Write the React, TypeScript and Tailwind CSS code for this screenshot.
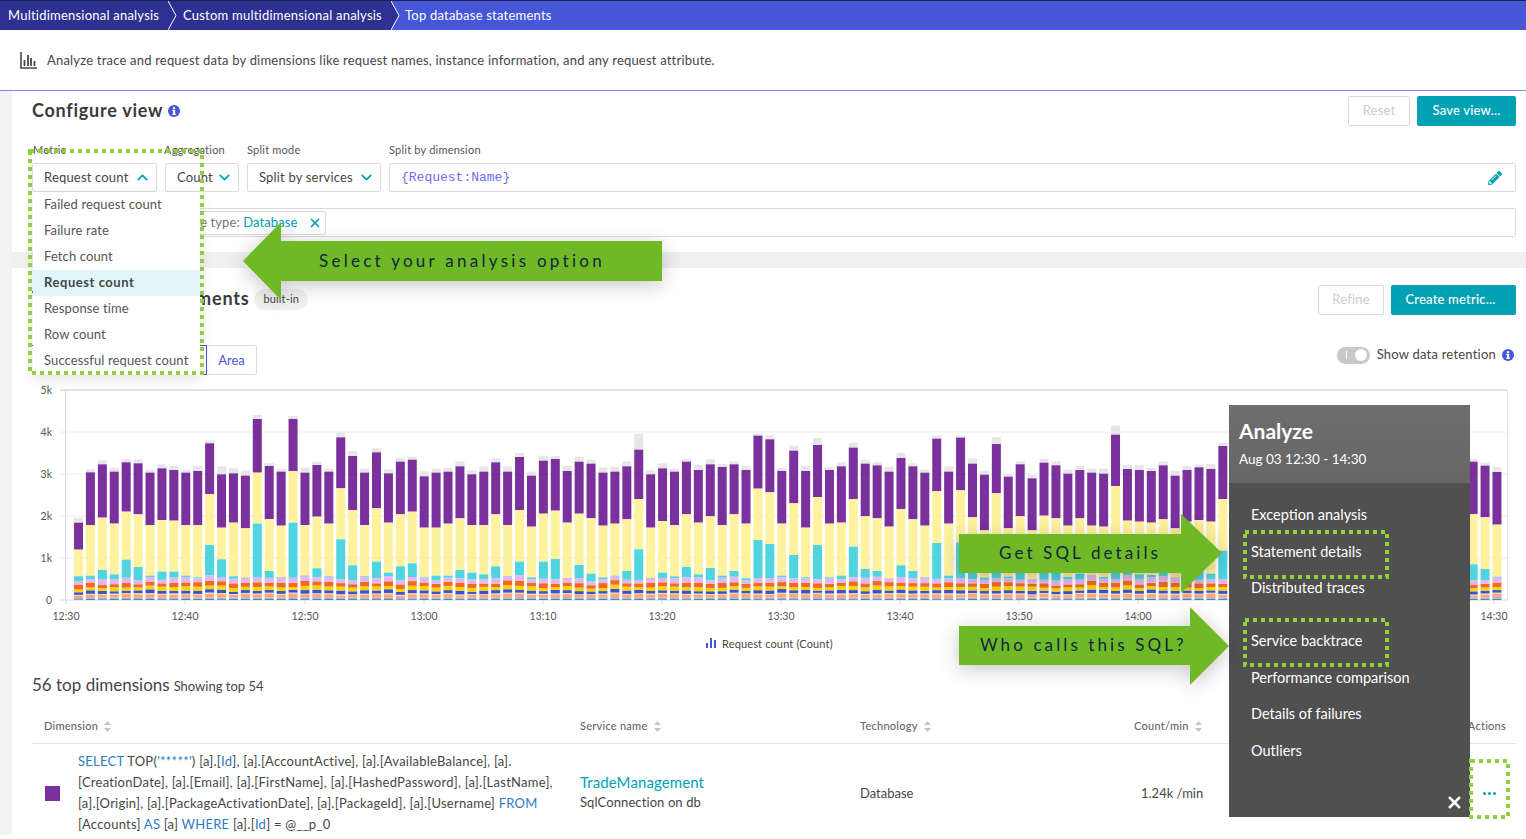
import React from "react";
import { ChevronDown, ChevronUp, X } from "lucide-react";
import { FaPencilAlt } from "react-icons/fa";

const D: number[][] = [
  [413,494,574],[262,420,572],[238,398,555],[260,416,568],[232,380,524],[235,388,546],[263,420,572],[250,405,560],[255,407,560],[263,420,572],[258,420,577],[175,327,480],[268,428,523],[265,413,574],[272,430,582],[102,263,416],[243,402,558],[260,422,577],[102,258,413],[263,420,574],[240,395,550],[260,416,574],[157,310,463],
  [213,375,541],[263,420,574],[202,370,530],[265,413,563],[230,388,544],[224,380,535],[274,428,577],[263,428,572],[260,416,572],[244,400,555],[268,420,563],[260,420,568],[232,388,544],[260,420,574],[216,375,530],[272,425,577],[227,386,530],[222,377,522],[258,413,580],[230,386,540],[236,400,566],[263,422,577],[260,416,572],[244,403,558],[194,342,493],[268,428,583],[250,408,563],
  [260,420,574],[230,388,546],[255,413,568],[238,394,549],[246,420,572],[238,388,558],[255,416,580],[152,311,465],[163,322,477],[258,416,572],[197,355,510],[258,428,577],[180,336,480],[255,416,577],[244,413,572],[188,342,485],[236,394,552],[241,400,558],[260,425,582],[219,372,541],[244,403,558],[263,422,577],[161,319,474],[260,416,572],[158,316,472],
  [236,397,558],[269,436,578],[177,325,480],[275,430,575],[238,394,545],[280,436,590],[233,392,548],[241,400,555],[266,422,576],[255,400,566],[263,422,577],[266,425,576],[149,303,460],[252,407,560],[255,410,568],[258,413,570],[241,403,560],[272,430,588],[255,410,570],[247,405,560],[252,410,566],[183,342,497],
];
const TAIL: [number, number[]][] = [[117,[230,387,538]],[118,[242,397,552]],[119,[261,419,575]]];
const BIG_GRAY: Record<number, number> = { 12: 8, 47: 16, 62: 7, 87: 9, 74: 2, 77: 7, 57: 2 };
const hash = (i: number, k: number) => { const s = Math.sin(i * 12.9898 + k * 78.233) * 43758.5453; return s - Math.floor(s); };
const SEG = ["#2e9e8e","#c9a0dc","#f9a87a","#f7d79a","#3b4fd8","#f7d308","#f26a1b","#e2b6f0"];
const SEGH = [1,1.5,3,1,3,3.5,4,4.5];

function Bar({ i, d }: { i: number; d: number[] }) {
  const x = 74 + 11.92 * i;
  const toY = (z: number) => 385 + z / 3;
  const [p, y, c] = d.map(toY);
  const g = BIG_GRAY[i] ?? 3 + Math.floor(hash(i, 9) * 3);
  let cur = 600;
  const rects = SEGH.map((h, k) => {
    const hh = h * (0.75 + hash(i, k) * 0.5);
    cur -= hh;
    return <rect key={k} x={x} y={cur} width={9} height={hh} fill={SEG[k]} />;
  });
  const cb = Math.max(cur, c + 1);
  return (
    <g>
      <rect x={x} y={p - g} width={9} height={g} fill="#e6e6e6" />
      <rect x={x} y={p} width={9} height={y - p} fill="#7a319e" />
      <rect x={x} y={y} width={9} height={c - y} fill="#fff29e" />
      <rect x={x} y={c} width={9} height={Math.max(cb - c, 0)} fill="#4fd4e0" />
      {rects}
    </g>
  );
}

function Chart() {
  const times: [number, string][] = [[66,"12:30"],[185,"12:40"],[305,"12:50"],[424,"13:00"],[543,"13:10"],[662,"13:20"],[781,"13:30"],[900,"13:40"],[1019,"13:50"],[1138,"14:00"],[1494,"14:30"]];
  const ys: [number, string][] = [[390,"5k"],[432,"4k"],[474,"3k"],[516,"2k"],[558,"1k"],[600,"0"]];
  return (
    <svg width={1514} height={240} viewBox="12 385 1514 240" className="block">
      {ys.map(([y, l]) => (
        <g key={l}>
          <line x1={60} x2={1507} y1={y} y2={y} stroke={y === 390 ? "#e2e2e2" : y === 600 ? "#d4daf0" : "#ececec"} strokeWidth={y === 390 ? 2 : 1} />
          <text x={52} y={y + 3.5} textAnchor="end" fontSize={10.5} fill="#555">{l}</text>
        </g>
      ))}
      <line x1={65.5} x2={65.5} y1={390} y2={600} stroke="#d4daf0" />
      <line x1={1507.5} x2={1507.5} y1={390} y2={600} stroke="#e2e2e2" />
      {D.map((d, i) => <Bar key={i} i={i} d={d} />)}
      {TAIL.map(([i, d]) => <Bar key={i} i={i} d={d} />)}
      {times.map(([x, l]) => (
        <g key={l}>
          <line x1={x} x2={x} y1={600} y2={604} stroke="#d4daf0" />
          <text x={x} y={620} textAnchor="middle" fontSize={10.5} fill="#555">{l}</text>
        </g>
      ))}
    </svg>
  );
}

function Info({ className }: { className: string }) {
  return (
    <svg viewBox="0 0 12 12" className={className}>
      <circle cx="6" cy="6" r="6" fill="#4556d7" />
      <rect x="5" y="5" width="2.2" height="4.6" fill="#fff" />
      <rect x="4.2" y="5" width="1.5" height="1" fill="#fff" />
      <rect x="4.2" y="8.8" width="3.8" height="1" fill="#fff" />
      <circle cx="6" cy="3.2" r="1.2" fill="#fff" />
    </svg>
  );
}

function Sort() {
  return (
    <svg width="7" height="11" viewBox="0 0 7 11" className="ml-[6px] inline-block">
      <path d="M3.5 0 7 4H0Z M0 7h7L3.5 11Z" fill="#c4c4c4" />
    </svg>
  );
}

function Chevron({ left, right }: { left: string; right: string }) {
  return (
    <svg width="9" height="29" viewBox="0 0 9 29" className="shrink-0 block">
      <rect width="9" height="29" fill={right} />
      <path d="M0 0 8 14.5 0 29Z" fill={left} />
      <path d="M0 0 8 14.5 0 29" fill="none" stroke="#fff" strokeWidth="1" />
    </svg>
  );
}

function Dotted({ className, w, h }: { className: string; w: number; h: number }) {
  return (
    <svg width={w} height={h} className={"absolute pointer-events-none " + className}>
      <rect x="2" y="2" width={w - 4} height={h - 4} fill="none" stroke="#8fd03f" strokeWidth="4" strokeDasharray="4 4" />
    </svg>
  );
}

function Select({ label, className, up }: { label: string; className: string; up?: boolean }) {
  return (
    <div className={"flex h-[29px] items-center justify-between rounded-[2px] border border-[#dcdcdc] bg-white pl-[11px] pr-[5px] text-[13px] tracking-[0.18px] text-[#454646] " + className}>
      <span>{label}</span>
      {up ? <ChevronUp size={17} strokeWidth={2.5} color="#00a1b2" /> : <ChevronDown size={17} strokeWidth={2.5} color="#00a1b2" />}
    </div>
  );
}

const BtnGhost = ({ className, children }: { className: string; children: React.ReactNode }) => (
  <div className={"flex h-[30px] items-center justify-center rounded-[2px] border border-[#dcdcdc] text-[13px] tracking-[0.2px] text-[#cccccc] " + className}>{children}</div>
);
const BtnTeal = ({ className, children }: { className: string; children: React.ReactNode }) => (
  <div className={"flex h-[30px] items-center justify-center rounded-[2px] bg-[#00a1b2] text-[13px] font-medium tracking-[0.2px] text-white " + className}>{children}</div>
);

function Dropdown() {
  const items = ["Failed request count","Failure rate","Fetch count","Request count","Response time","Row count","Successful request count"];
  return (
    <div className="absolute left-[33px] top-[192px] w-[167px] bg-white pb-[1px] shadow-[0_4px_12px_rgba(0,0,0,0.12)]">
      {items.map((t) => (
        <div key={t} className={"flex h-[26px] items-center pl-[11px] text-[13px] whitespace-nowrap " + (t === "Request count" ? "bg-[#e2f6fa] font-bold tracking-[0.55px] text-[#454646]" : "tracking-[0.12px] text-[#555]")}>{t}</div>
      ))}
    </div>
  );
}

function Arrow({ className, w, h, points, label, labelClass }: { className: string; w: number; h: number; points: string; label: string; labelClass: string }) {
  return (
    <div className={"absolute " + className}>
      <svg width={w} height={h} className="block overflow-visible drop-shadow-[0_4px_10px_rgba(0,0,0,0.22)]">
        <polygon points={points} fill="#70b926" />
      </svg>
      <span className={"absolute whitespace-nowrap text-[17px] text-[#10253f] " + labelClass}>{label}</span>
    </div>
  );
}

function AnalyzePanel() {
  const rows: [string, string][] = [["Exception analysis","mt-[21px]"],["Statement details","mt-[15.5px]"],["Distributed traces","mt-[15.5px]"],["Service backtrace","mt-[32px]"],["Performance comparison","mt-[15.5px]"],["Details of failures","mt-[15.5px]"],["Outliers","mt-[15.5px]"]];
  return (
    <div className="absolute left-[1229px] top-[405px] flex h-[412px] w-[241px] flex-col bg-[#505050] text-white">
      <div className="h-[78px] bg-gradient-to-b from-[#6e6e6e] to-[#666666] pl-[10px] pt-[12px]">
        <div className="text-[21px] font-bold leading-[28px]">Analyze</div>
        <div className="mt-[5px] text-[13.5px] leading-[18px]">Aug 03 12:30 - 14:30</div>
      </div>
      <div className="relative flex-1 pl-[22px]">
        {rows.map(([t, m]) => <div key={t} className={"h-[21px] text-[14.5px] leading-[21px] " + m}>{t}</div>)}
        <X className="absolute bottom-[5px] right-[6px]" size={19} strokeWidth={3.2} color="#fff" />
      </div>
    </div>
  );
}

export default function App() {
  const kw = "text-[#2d7cc1]";
  return (
    <div className="relative h-[839px] w-[1526px] overflow-hidden bg-white font-[Lato,sans-serif] text-[#454646]">
      <div className="flex h-[30px] items-stretch border-t border-[#1d1d4f] bg-[#4556d7] text-[13px] tracking-[0.22px] text-white">
        <div className="flex w-[168px] items-center bg-[#2e3192] pl-[8px]">Multidimensional analysis</div>
        <Chevron left="#2e3192" right="#2e3192" />
        <div className="flex w-[214px] items-center bg-[#2e3192] pl-[6px]">Custom multidimensional analysis</div>
        <Chevron left="#2e3192" right="#4556d7" />
        <div className="flex items-center pl-[5px]">Top database statements</div>
      </div>

      <div className="flex h-[61px] items-center border-b border-[#7a8ce8] pl-[20px] text-[13px]">
        <svg width="18" height="17" viewBox="0 0 18 17" className="mr-[9px] mt-[1px]">
          <path d="M1 0v16h16" fill="none" stroke="#454646" strokeWidth="1.6" />
          <path d="M4.5 8v6M8 3v11M11 6v8M14.5 9v5" fill="none" stroke="#454646" strokeWidth="1.8" />
        </svg>
        <span className="pt-[1px] tracking-[0.2px]">Analyze trace and request data by dimensions like request names, instance information, and any request attribute.</span>
      </div>

      <div className="flex">
        <div className="w-[12px] shrink-0 bg-[#f2f2f2]" />
        <div className="min-w-0 flex-1">
          <section className="h-[161px] pl-[20px] pr-[10px] pt-[5px]">
            <div className="flex h-[30px] items-center">
              <h1 className="pb-[2px] text-[18px] font-bold tracking-[0.75px] text-[#3a3a3a]">Configure view</h1>
              <Info className="ml-[5px] h-[12px] w-[12px]" />
              <div className="ml-auto flex gap-[7px]">
                <BtnGhost className="w-[62px]">Reset</BtnGhost>
                <BtnTeal className="w-[99px]">Save view...</BtnTeal>
              </div>
            </div>
            <div className="mt-[17px] flex text-[11px] leading-[14px] tracking-[0.22px] text-[#555]">
              <span className="ml-[1px] w-[131px]">Metric</span>
              <span className="w-[83px]">Aggregation</span>
              <span className="w-[142px]">Split mode</span>
              <span>Split by dimension</span>
            </div>
            <div className="mt-[6px] flex gap-[8px]">
              <Select label="Request count" className="w-[125px]" up />
              <Select label="Count" className="w-[74px]" />
              <Select label="Split by services" className="w-[134px]" />
              <div className="flex h-[29px] flex-1 items-center justify-between rounded-[2px] border border-[#dcdcdc] pl-[11px] pr-[13px] font-['Liberation_Mono',monospace] text-[13px] text-[#6f6cf0]">
                <span>{"{Request:Name}"}</span>
                <FaPencilAlt size={14} color="#00a1b2" />
              </div>
            </div>
            <div className="ml-[1px] mt-[16px] flex h-[29px] items-center rounded-[2px] border border-[#dcdcdc] pl-[124px]">
              <div className="flex h-[24px] items-center rounded-[2px] border border-[#dcdcdc] bg-white pl-[6px] pr-[3px] text-[13px] tracking-[0.1px] text-[#777]">
                <span>Service type:&nbsp;</span>
                <span className="text-[#00a1b2]">Database</span>
                <X className="ml-[11px]" size={14} strokeWidth={3} color="#00a1b2" />
              </div>
            </div>
          </section>

          <div className="h-[16px] bg-[#f0f0f0]" />

          <section className="pt-[17px]">
            <div className="flex h-[29px] items-center pl-[20px] pr-[10px]">
              <h2 className="pb-[2px] text-[18px] font-bold tracking-[0.8px] text-[#3a3a3a]">Top database statements</h2>
              <span className="ml-[5px] flex h-[21px] items-center rounded-full bg-[#f0f0f0] px-[9px] text-[11px] tracking-[0.15px]">built-in</span>
              <div className="ml-auto flex gap-[7px]">
                <BtnGhost className="w-[66px]">Refine</BtnGhost>
                <BtnTeal className="w-[125px] pr-[6px]">Create metric...</BtnTeal>
              </div>
            </div>
            <div className="mt-[31px] flex h-[30px] items-center pl-[20px] pr-[12px]">
              <div className="flex h-[30px] text-[13px] text-[#4556d7]">
                <span className="w-[175px] border border-l-0 border-[#4556d7] bg-white" />
                <span className="flex w-[50px] items-center justify-center rounded-r-[2px] border border-l-0 border-[#dcdcdc] pt-[1px]">Area</span>
              </div>
              <div className="mb-[10px] ml-auto flex items-center">
                <div className="flex h-[17px] w-[33px] items-center justify-end rounded-full bg-[#c8c8c8] pr-[3px]">
                  <span className="mr-[8px] h-[8px] w-px bg-white" />
                  <span className="h-[12px] w-[12px] rounded-full bg-white" />
                </div>
                <span className="ml-[7px] text-[13px] tracking-[0.22px]">Show data retention</span>
                <Info className="ml-[6px] h-[12px] w-[12px]" />
              </div>
            </div>
            <div className="mt-[10px]"><Chart /></div>
            <div className="mt-[10px] flex h-[18px] items-center pl-[694px] text-[11px] tracking-[0.15px]">
              <svg width="11" height="10" viewBox="0 0 11 10" className="mb-[3px] mr-[5px]">
                <path d="M1 5v5M5 0v10M9 2v8" stroke="#4556d7" strokeWidth="2" />
              </svg>
              Request count (Count)
            </div>
            <div className="mt-[19px] flex h-[20px] items-baseline pl-[20px]">
              <span className="text-[17px]">56 top dimensions</span>
              <span className="ml-[4px] text-[13px]">Showing top 54</span>
            </div>
            <div className="ml-[20px] mr-[10px] mt-[21px] grid h-[31px] grid-cols-[548px_280px_274px_1fr] items-center border-b border-[#e6e6e6] pb-[4px] text-[11px] font-medium tracking-[0.25px] text-[#666]">
              <span className="pl-[12px]">Dimension<Sort /></span>
              <span>Service name<Sort /></span>
              <span>Technology<Sort /></span>
              <span className="flex justify-between pr-[10px]"><span>Count/min<Sort /></span><span>Actions</span></span>
            </div>
            <div className="ml-[20px] mr-[10px] grid grid-cols-[548px_280px_274px_1fr] items-center pt-[7px] text-[13px]">
              <div className="flex items-center pl-[13px]">
                <span className="mr-[18px] h-[15px] w-[15px] shrink-0 bg-[#7a319e]" />
                <div className="whitespace-nowrap leading-[21px] tracking-[0.25px]">
                  <span className={kw}>SELECT</span> TOP(<span className="text-[#2d7cc1]">'*****'</span>) [a].[<span className={kw}>Id</span>], [a].[AccountActive], [a].[AvailableBalance], [a].<br />
                  [CreationDate], [a].[Email], [a].[FirstName], [a].[HashedPassword], [a].[LastName],<br />
                  [a].[Origin], [a].[PackageActivationDate], [a].[PackageId], [a].[Username] <span className={kw}>FROM</span><br />
                  [Accounts] <span className={kw}>AS</span> [a] <span className={kw}>WHERE</span> [a].[<span className={kw}>Id</span>] = @__p_0
                </div>
              </div>
              <div className="pb-[2px] tracking-[0.1px]">
                <div className="text-[15px] leading-[20px] text-[#00a1b2]">TradeManagement</div>
                <div className="leading-[20px]">SqlConnection on db</div>
              </div>
              <div className="pt-[1px]">Database</div>
              <div className="flex items-center justify-between pl-[7px] pr-[20px] pt-[1px]">
                <span>1.24k /min</span>
                <span className="flex gap-[2px]">
                  <span className="h-[3px] w-[3px] rounded-full bg-[#00a1b2]" />
                  <span className="h-[3px] w-[3px] rounded-full bg-[#00a1b2]" />
                  <span className="h-[3px] w-[3px] rounded-full bg-[#00a1b2]" />
                </span>
              </div>
            </div>
          </section>
        </div>
      </div>

      <Dropdown />
      <Dotted className="left-[28px] top-[149px]" w={176} h={226} />
      <Arrow className="left-[243px] top-[222px]" w={419} h={78} points="0,39 38,0 38,19 419,19 419,59 38,59 38,78" label="Select your analysis option" labelClass="left-[76px] top-[26px] tracking-[3.27px]" />
      <AnalyzePanel />
      <Dotted className="left-[1243px] top-[530px]" w={146} h={49} />
      <Dotted className="left-[1243px] top-[618px]" w={146} h={49} />
      <Dotted className="left-[1469px] top-[759px]" w={41} h={60} />
      <Arrow className="left-[959px] top-[514px]" w={263} h={79} points="0,20 222,20 222,0 263,39 222,79 222,59 0,59" label="Get SQL details" labelClass="left-[40px] top-[26px] tracking-[3.1px]" />
      <Arrow className="left-[959px] top-[607px]" w={270} h={78} points="0,19 231,19 231,0 270,39 231,78 231,58 0,58" label="Who calls this SQL?" labelClass="left-[21px] top-[25px] tracking-[3.1px]" />
    </div>
  );
}
